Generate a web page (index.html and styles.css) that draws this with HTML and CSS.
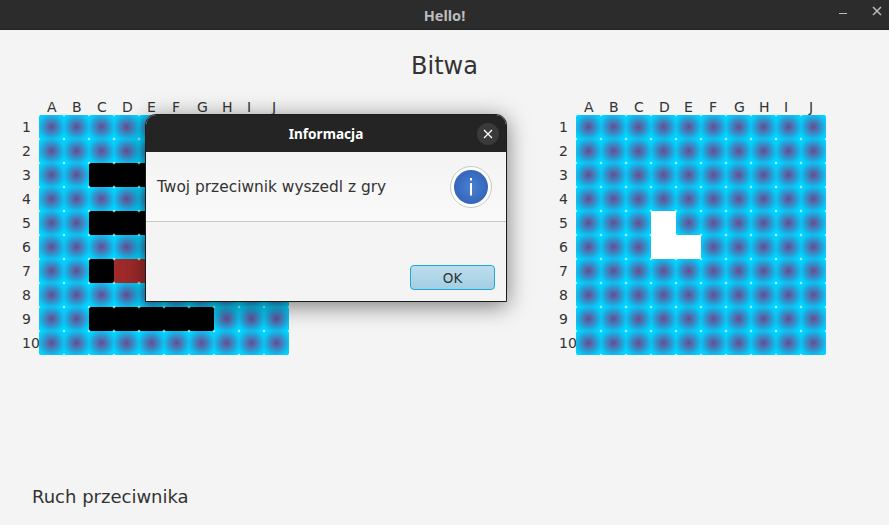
FILE: index.html
```html
<!DOCTYPE html>
<html lang="pl">
<head>
    <meta charset="UTF-8">
    <meta name="viewport" content="width=device-width, initial-scale=1.0">
    <title>Hello!</title>
    <link rel="stylesheet" href="styles.css">
</head>
<body>
    <header class="titlebar">
        <span class="titlebar-name">Hello!</span>
        <span class="win-btn win-min"></span>
        <svg class="win-close" width="10" height="10" viewBox="0 0 10 10"><path d="M1 1L9 9M9 1L1 9" stroke="#bdbdbd" stroke-width="1.5"/></svg>
    </header>

    <main class="game">
        <h1>Bitwa</h1>
        <div class="boards">
            <div class="board">
                <span></span><b>A</b><b>B</b><b>C</b><b>D</b><b>E</b><b>F</b><b>G</b><b>H</b><b>I</b><b>J</b>
                <i>1</i><a></a><a></a><a></a><a></a><a></a><a></a><a></a><a></a><a></a><a></a>
                <i>2</i><a></a><a></a><a></a><a></a><a></a><a></a><a></a><a></a><a></a><a></a>
                <i>3</i><a></a><a></a><a class="ship"></a><a class="ship"></a><a class="ship"></a><a></a><a></a><a></a><a></a><a></a>
                <i>4</i><a></a><a></a><a></a><a></a><a></a><a></a><a></a><a></a><a></a><a></a>
                <i>5</i><a></a><a></a><a class="ship"></a><a class="ship"></a><a class="ship"></a><a></a><a></a><a></a><a></a><a></a>
                <i>6</i><a></a><a></a><a></a><a></a><a></a><a></a><a></a><a></a><a></a><a></a>
                <i>7</i><a></a><a></a><a class="ship"></a><a class="hit"></a><a class="hit"></a><a></a><a></a><a></a><a></a><a></a>
                <i>8</i><a></a><a></a><a></a><a></a><a></a><a></a><a></a><a></a><a></a><a></a>
                <i>9</i><a></a><a></a><a class="ship"></a><a class="ship"></a><a class="ship"></a><a class="ship"></a><a class="ship"></a><a></a><a></a><a></a>
                <i>10</i><a></a><a></a><a></a><a></a><a></a><a></a><a></a><a></a><a></a><a></a>
            </div>
            <div class="board">
                <span></span><b>A</b><b>B</b><b>C</b><b>D</b><b>E</b><b>F</b><b>G</b><b>H</b><b>I</b><b>J</b>
                <i>1</i><a></a><a></a><a></a><a></a><a></a><a></a><a></a><a></a><a></a><a></a>
                <i>2</i><a></a><a></a><a></a><a></a><a></a><a></a><a></a><a></a><a></a><a></a>
                <i>3</i><a></a><a></a><a></a><a></a><a></a><a></a><a></a><a></a><a></a><a></a>
                <i>4</i><a></a><a></a><a></a><a></a><a></a><a></a><a></a><a></a><a></a><a></a>
                <i>5</i><a></a><a></a><a></a><a class="miss"></a><a></a><a></a><a></a><a></a><a></a><a></a>
                <i>6</i><a></a><a></a><a></a><a class="miss"></a><a class="miss"></a><a></a><a></a><a></a><a></a><a></a>
                <i>7</i><a></a><a></a><a></a><a></a><a></a><a></a><a></a><a></a><a></a><a></a>
                <i>8</i><a></a><a></a><a></a><a></a><a></a><a></a><a></a><a></a><a></a><a></a>
                <i>9</i><a></a><a></a><a></a><a></a><a></a><a></a><a></a><a></a><a></a><a></a>
                <i>10</i><a></a><a></a><a></a><a></a><a></a><a></a><a></a><a></a><a></a><a></a>
            </div>
        </div>
        <p class="turn">Ruch przeciwnika</p>
    </main>

    <section class="dialog">
        <div class="dialog-title">
            <span>Informacja</span>
            <span class="dialog-close">
                <svg width="10" height="10" viewBox="0 0 10 10"><path d="M1 1L9 9M9 1L1 9" stroke="#fff" stroke-width="1.3"/></svg>
            </span>
        </div>
        <div class="dialog-head">
            <span>Twoj przeciwnik wyszedl z gry</span>
            <svg class="dialog-icon" width="44" height="44" viewBox="0 0 44 44">
                <defs>
                    <radialGradient id="infoBlue" cx="50%" cy="50%" r="55%">
                        <stop offset="0" stop-color="#4a80d2"/>
                        <stop offset="1" stop-color="#3263b8"/>
                    </radialGradient>
                </defs>
                <circle cx="22" cy="22" r="20.5" fill="#fff" stroke="#c9c9c9"/>
                <circle cx="22" cy="22" r="17" fill="url(#infoBlue)"/>
                <rect x="21" y="13" width="2" height="2.5" fill="#fff"/>
                <rect x="21" y="18" width="2" height="12.5" fill="#fff"/>
            </svg>
        </div>
        <div class="dialog-foot">
            <button class="dialog-ok">OK</button>
        </div>
    </section>
</body>
</html>
```
FILE: styles.css
```css
* {
    box-sizing: border-box;
}

body {
    margin: 0;
    height: 525px;
    overflow: hidden;
    background-color: #f4f4f4;
    color: #333;
    font-family: 'DejaVu Sans', sans-serif;
}

.titlebar {
    height: 30px;
    background-color: #2c2c2c;
    display: flex;
    align-items: center;
    justify-content: center;
    position: relative;
    border-bottom: 1px solid #222;
}

.titlebar-name {
    color: #bcbcbc;
    font-family: 'Noto Sans', sans-serif;
    font-weight: 700;
    font-size: 14.5px;
}

.win-min {
    position: absolute;
    left: 839px;
    top: 13px;
    width: 8px;
    height: 1px;
    background-color: #bdbdbd;
}

.win-close {
    position: absolute;
    left: 872px;
    top: 6px;
}

.game {
    height: 495px;
    display: flex;
    flex-direction: column;
}

h1 {
    margin: 0;
    padding-top: 21px;
    height: 67px;
    line-height: 30px;
    text-align: center;
    font-size: 24px;
    font-weight: 400;
}

.boards {
    display: flex;
    gap: 270px;
    padding-left: 22px;
}

.board {
    display: grid;
    grid-template-columns: 17px repeat(10, 25px);
    grid-template-rows: 18px repeat(10, 24px);
    font-size: 14px;
}

.board b {
    font-weight: 400;
    padding-left: 8px;
    line-height: 20px;
}

.board i {
    font-style: normal;
    line-height: 24px;
}

.board a {
    border-radius: 2px;
    background: radial-gradient(circle 14px at center, #6b4990 0%, #00d2ff 100%);
}

.board a.ship {
    background: #000;
}

.board a.hit {
    background: #a02a2a;
}

.board a.miss {
    background: #fff;
}

.turn {
    margin: auto 0 0;
    padding: 0 0 16px 32px;
    font-size: 18px;
    line-height: 24px;
}

.dialog {
    position: absolute;
    left: 145px;
    top: 114px;
    width: 362px;
    height: 188px;
    border: 1px solid #1c1c1c;
    border-radius: 11px 11px 0 0;
    background-color: #f4f4f4;
    box-shadow: 0 4px 22px rgba(0, 0, 0, 0.5);
    display: flex;
    flex-direction: column;
}

.dialog-title {
    height: 37px;
    flex: none;
    background-color: #242424;
    border-radius: 10px 10px 0 0;
    color: #fff;
    font-family: 'Noto Sans', sans-serif;
    font-weight: 700;
    font-size: 13.6px;
    display: flex;
    align-items: center;
    justify-content: center;
    position: relative;
}

.dialog-close {
    position: absolute;
    right: 7px;
    top: 8px;
    width: 22px;
    height: 22px;
    border-radius: 50%;
    background-color: #3a3a3a;
    display: flex;
    align-items: center;
    justify-content: center;
}

.dialog-head {
    height: 70px;
    flex: none;
    padding: 0 13px 0 11px;
    background: linear-gradient(#f4f4f4, #f9f9f9);
    border-bottom: 1px solid #c8c8c8;
    display: flex;
    align-items: center;
    justify-content: space-between;
    font-size: 15.4px;
}

.dialog-foot {
    flex: 1;
    padding: 0 11px 11px 0;
    display: flex;
    align-items: flex-end;
    justify-content: flex-end;
}

.dialog-ok {
    width: 85px;
    height: 25px;
    padding: 0;
    border: 1.5px solid #1ea7d8;
    border-radius: 4px;
    background: linear-gradient(#bcdeee, #a2cde2);
    color: #333;
    font-family: 'DejaVu Sans', sans-serif;
    font-size: 13.5px;
}
```
